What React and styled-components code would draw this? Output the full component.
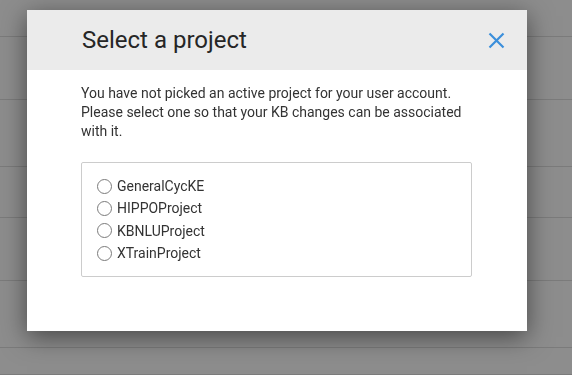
import React, { useState } from "react";
import styled, { createGlobalStyle } from "styled-components";

const GlobalStyle = createGlobalStyle`
  html, body {
    margin: 0;
    padding: 0;
    background: #8c8c8c;
    font-family: Roboto, "Liberation Sans", sans-serif;
    overflow: hidden;
  }
`;

const Page = styled.div`
  width: 572px;
  height: 375px;
  background: #8d8d8d;
  display: flex;
  flex-direction: column;
`;

const PageRow = styled.div`
  height: ${(p) => p.h}px;
  flex-shrink: 0;
  border-bottom: 1px solid #7b7b7b;
  box-sizing: border-box;
`;

const Overlay = styled.div`
  position: fixed;
  inset: 0;
  display: flex;
  justify-content: flex-start;
  align-items: flex-start;
  padding: 10px 0 0 27px;
`;

const Modal = styled.div`
  width: 500px;
  background: #fff;
  box-shadow: 0 6px 24px rgba(0, 0, 0, 0.5);
  display: flex;
  flex-direction: column;
`;

const Header = styled.div`
  height: 60px;
  background: #ebebeb;
  display: flex;
  align-items: center;
  justify-content: space-between;
  padding: 0 21px 0 55px;
  box-sizing: border-box;
`;

const Title = styled.h2`
  margin: 0;
  font-size: 24px;
  font-weight: 400;
  color: #262626;
`;

const CloseButton = styled.button`
  border: 0;
  background: none;
  padding: 0;
  width: 20px;
  height: 20px;
  display: flex;
  align-items: center;
  justify-content: center;
  cursor: pointer;
`;

const Body = styled.div`
  padding: 14px 55px 54px 54px;
`;

const Message = styled.p`
  margin: 0 0 21px;
  font-size: 14px;
  line-height: 19px;
  color: #333;
`;

const ProjectBox = styled.div`
  border: 1px solid #cccccc;
  border-radius: 2px;
  padding: 12px 15px 12px;
  display: flex;
  flex-direction: column;
`;

const Option = styled.label`
  display: flex;
  align-items: center;
  height: 22.3px;
  gap: 6px;
  font-size: 14px;
  color: #333;
  cursor: pointer;
`;

const RadioCircle = styled.span`
  width: 13px;
  height: 13px;
  border: 1.5px solid #7a7a7a;
  border-radius: 50%;
  display: flex;
  align-items: center;
  justify-content: center;
  flex-shrink: 0;
  margin-right: -1px;

  &::after {
    content: "";
    width: 7px;
    height: 7px;
    border-radius: 50%;
    background: ${(p) => (p.checked ? "#3a8fd9" : "transparent")};
  }
`;

const HiddenInput = styled.input`
  display: none;
`;

const projects = ["GeneralCycKE", "HIPPOProject", "KBNLUProject", "XTrainProject"];
const rows = [37, 63, 67, 51, 63, 67, 27];

export default function App() {
  const [selected, setSelected] = useState(null);

  return (
    <>
      <GlobalStyle />
      <Page>
        {rows.map((h, i) => (
          <PageRow key={i} h={h} />
        ))}
      </Page>
      <Overlay>
        <Modal>
          <Header>
            <Title>Select a project</Title>
            <CloseButton aria-label="Close">
              <svg width="17" height="17" viewBox="0 0 17 17">
                <path
                  d="M1.5 1.5 L15.5 15.5 M15.5 1.5 L1.5 15.5"
                  stroke="#3b8fdb"
                  strokeWidth="2.2"
                  fill="none"
                />
              </svg>
            </CloseButton>
          </Header>
          <Body>
            <Message>
              You have not picked an active project for your user account.
              Please select one so that your KB changes can be associated
              with it.
            </Message>
            <ProjectBox>
              {projects.map((name) => (
                <Option key={name}>
                  <HiddenInput
                    type="radio"
                    name="project"
                    checked={selected === name}
                    onChange={() => setSelected(name)}
                  />
                  <RadioCircle checked={selected === name} />
                  {name}
                </Option>
              ))}
            </ProjectBox>
          </Body>
        </Modal>
      </Overlay>
    </>
  );
}
